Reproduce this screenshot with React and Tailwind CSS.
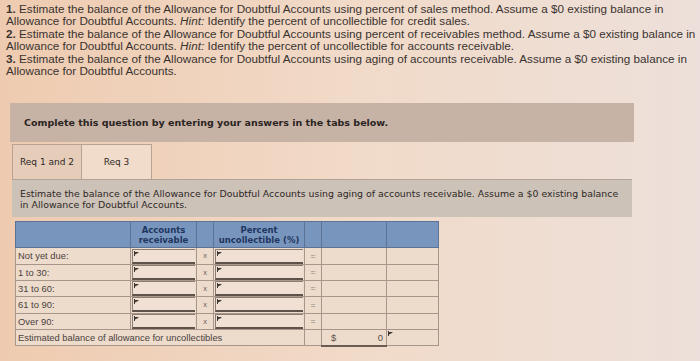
import React from 'react';

const rows = ['Not yet due:', '1 to 30:', '31 to 60:', '61 to 90:', 'Over 90:'];

function Flag() {
  return (
    <svg className="absolute left-[1px] top-[1px]" width="5" height="5" viewBox="0 0 5 5">
      <path d="M0 0 L5 1.5 L1 3.5 Z M0 0 L1 0 L1 5 L0 5 Z" fill="#3c3633" />
    </svg>
  );
}

function InputBox() {
  return (
    <div className="relative h-[15px] mx-[1px] bg-[#efe0d3] border-t border-l border-[#8c7d72] border-b-2 border-b-[#5e524b]">
      <Flag />
    </div>
  );
}

export default function App() {
  return (
    <div className="w-[700px] h-[361px] overflow-hidden bg-linear-to-r from-[#eecbb0] via-[#f1dac8] to-[#ede0da] text-[#3a3330]">
      <div className="pt-[3px] pl-[6px] text-[11.7px] leading-[12.4px] whitespace-nowrap font-['Liberation_Sans',sans-serif]">
        <p><b>1.</b> Estimate the balance of the Allowance for Doubtful Accounts using percent of sales method. Assume a $0 existing balance in</p>
        <p>Allowance for Doubtful Accounts. <i>Hint:</i> Identify the percent of uncollectible for credit sales.</p>
        <p><b>2.</b> Estimate the balance of the Allowance for Doubtful Accounts using percent of receivables method. Assume a $0 existing balance in</p>
        <p>Allowance for Doubtful Accounts. <i>Hint:</i> Identify the percent of uncollectible for accounts receivable.</p>
        <p><b>3.</b> Estimate the balance of the Allowance for Doubtful Accounts using aging of accounts receivable. Assume a $0 existing balance in</p>
        <p>Allowance for Doubtful Accounts.</p>
      </div>

      <div className="mt-[26px] ml-[10px] w-[624px] h-[39px] flex items-center pl-[14px] bg-[#c7b3a5] font-['DejaVu_Sans',sans-serif] font-bold text-[9.5px] text-[#2a2422]">
        Complete this question by entering your answers in the tabs below.
      </div>

      <div className="ml-[12px] mt-[2px] flex font-['DejaVu_Sans',sans-serif] text-[9px] text-[#2e2826]">
        <div className="w-[70px] h-[35px] flex items-center justify-center bg-[#e6cdb9] border border-[#b9a292] border-b-0">Req 1 and 2</div>
        <div className="w-[70px] h-[35px] flex items-center justify-center bg-[#f1dccb] border border-[#b9a292] border-b-0 border-l-0">Req 3</div>
      </div>

      <div className="ml-[12px] w-[620px] h-[38px] pt-[9px] pl-[8px] bg-[#cdc2b8] border-t border-[#b3a396] font-['DejaVu_Sans',sans-serif] text-[9.4px] leading-[10.5px] text-[#2e2826] whitespace-nowrap">
        <p>Estimate the balance of the Allowance for Doubtful Accounts using aging of accounts receivable. Assume a $0 existing balance</p>
        <p>in Allowance for Doubtful Accounts.</p>
      </div>

      <table className="ml-[15px] mt-[4px] border-collapse table-fixed w-[423px] font-['Liberation_Sans',sans-serif] text-[9.4px] text-[#4a423d]">
        <colgroup>
          <col className="w-[115px]" />
          <col className="w-[66px]" />
          <col className="w-[17px]" />
          <col className="w-[91px]" />
          <col className="w-[17px]" />
          <col className="w-[65px]" />
          <col className="w-[52px]" />
        </colgroup>
        <thead>
          <tr className="h-[26px] bg-[#7895bd] font-['DejaVu_Sans',sans-serif] font-bold text-[8.5px] leading-[10px] text-[#1f3560]">
            <th className="border border-[#5c7395]"></th>
            <th className="border border-[#5c7395] text-center">Accounts<br />receivable</th>
            <th className="border border-[#5c7395]"></th>
            <th className="border border-[#5c7395] text-center">Percent<br />uncollectible (%)</th>
            <th className="border border-[#5c7395]"></th>
            <th className="border border-[#5c7395]"></th>
            <th className="border border-[#5c7395]"></th>
          </tr>
        </thead>
        <tbody className="bg-[#eddbcc]">
          {rows.map((label) => (
            <tr key={label} className="h-[16.3px]">
              <td className="border border-[#a8968a] pl-[2px] leading-none">{label}</td>
              <td className="border border-[#a8968a] p-0"><InputBox /></td>
              <td className="border border-[#a8968a] text-center text-[7.5px] text-[#6a5f58] leading-none">x</td>
              <td className="border border-[#a8968a] p-0"><InputBox /></td>
              <td className="border border-[#a8968a] text-center text-[8.5px] text-[#8a7f78] leading-none">=</td>
              <td className="border border-[#a8968a]"></td>
              <td className="border border-[#a8968a]"></td>
            </tr>
          ))}
          <tr className="h-[16.3px]">
            <td colSpan={4} className="border border-[#a8968a] pl-[2px] leading-none">Estimated balance of allowance for uncollectibles</td>
            <td className="border border-[#a8968a]"></td>
            <td className="border border-[#a8968a] border-b-2 border-b-[#6a5c53] p-0">
              <div className="flex justify-between items-center px-[9px] pr-[3px] text-[#5a514b] leading-none">
                <span>$</span>
                <span>0</span>
              </div>
            </td>
            <td className="relative border border-[#a8968a] p-0">
              <Flag />
            </td>
          </tr>
        </tbody>
      </table>
    </div>
  );
}
